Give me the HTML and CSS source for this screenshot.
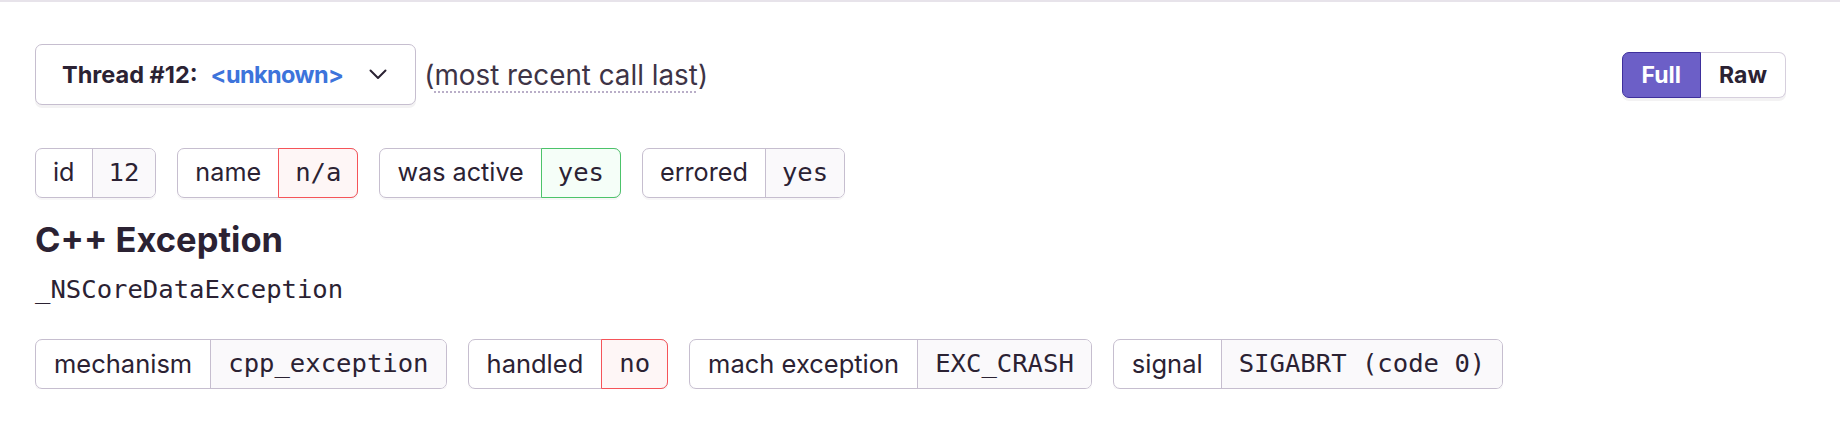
FILE: index.html
```html
<!DOCTYPE html>
<html>
<head>
<meta charset="utf-8">
<link rel="stylesheet" href="styles.css">
</head>
<body>
<div class="page">
  <div class="header">
    <div class="header-left">
      <button class="dropdown">
        <span class="dd-label">Thread #12:</span>
        <span class="dd-value">&lt;unknown&gt;</span>
        <svg class="chevron" width="18" height="11" viewBox="0 0 18 11"><path d="M1.5 1.5 L9 9 L16.5 1.5" fill="none" stroke="#2b2233" stroke-width="2" stroke-linecap="round" stroke-linejoin="round"/></svg>
      </button>
      <span class="order">(<span class="dotted">most recent call last</span>)</span>
    </div>
    <div class="seg">
      <button class="seg-btn active">Full</button>
      <button class="seg-btn">Raw</button>
    </div>
  </div>

  <div class="pills">
    <div class="pill"><span class="key">id</span><span class="val">12</span></div>
    <div class="pill"><span class="key">name</span><span class="val bad">n/a</span></div>
    <div class="pill"><span class="key">was active</span><span class="val good">yes</span></div>
    <div class="pill"><span class="key">errored</span><span class="val">yes</span></div>
  </div>

  <h3 class="exc-type">C++ Exception</h3>
  <div class="exc-value">_NSCoreDataException</div>

  <div class="pills mech">
    <div class="pill"><span class="key">mechanism</span><span class="val">cpp_exception</span></div>
    <div class="pill"><span class="key">handled</span><span class="val bad">no</span></div>
    <div class="pill"><span class="key">mach exception</span><span class="val">EXC_CRASH</span></div>
    <div class="pill"><span class="key">signal</span><span class="val">SIGABRT (code 0)</span></div>
  </div>
</div>
</body>
</html>
```

FILE: styles.css
```css
html, body {
  margin: 0;
  padding: 0;
  background: #ffffff;
}
body {
  font-family: Inter, "Noto Sans", sans-serif;
  color: #2b2233;
  border-top: 2px solid #e7e3ea;
  padding-top: 1px;
}
.page {
  padding: 41px 54px 0 35px;
}
.header {
  display: flex;
  align-items: flex-start;
  justify-content: space-between;
}
.header-left {
  display: flex;
  align-items: center;
  gap: 8px;
}
.dropdown {
  display: flex;
  align-items: center;
  height: 61px;
  box-sizing: border-box;
  padding: 0 28px 0 26px;
  background: #fff;
  border: 1px solid #c6becf;
  border-radius: 7px;
  box-shadow: 0 3px 0 rgba(43, 34, 51, 0.06);
  font-family: Inter, sans-serif;
  font-size: 23.5px;
  font-weight: 700;
  color: #2b2233;
}
.dd-label {
  margin-right: 13px;
}
.dd-value {
  color: #3d74db;
  margin-right: 26px;
  letter-spacing: -0.6px;
}
.chevron {
  display: block;
}
.order {
  font-size: 27.8px;
  color: #3e3446;
}
.dotted {
  text-decoration: underline dotted #b9aec8;
  text-underline-offset: 7px;
  text-decoration-thickness: 2px;
}
.seg {
  display: flex;
  margin-top: 8px;
  border-radius: 7px;
  box-shadow: 0 3px 0 rgba(43, 34, 51, 0.06);
}
.seg-btn {
  height: 46px;
  box-sizing: border-box;
  font-family: Inter, sans-serif;
  font-size: 23px;
  font-weight: 700;
  color: #2b2233;
  background: #fff;
  border: 1px solid #d6cfdd;
  padding: 0 18px;
}
.seg-btn:first-child {
  border-radius: 7px 0 0 7px;
}
.seg-btn:last-child {
  border-radius: 0 7px 7px 0;
  border-left: none;
}
.seg-btn.active {
  background: #6c5fc7;
  border-color: #3e2f9c;
  color: #fff;
  padding: 0 19px;
}
.pills {
  display: flex;
  gap: 21px;
  margin-top: 43px;
}
.pill {
  display: flex;
  height: 50px;
  box-sizing: border-box;
  border: 1px solid #c6becf;
  border-radius: 7px;
  box-shadow: 0 2px 0 rgba(43, 34, 51, 0.04);
  font-size: 25.2px;
  color: #2b2233;
}
.key, .val {
  display: flex;
  align-items: center;
  padding: 0 17px 2px 17px;
}
.val {
  padding: 0 16px 2px 16px;
  background: #faf9fb;
  border-left: 1px solid #c6becf;
  border-radius: 0 6px 6px 0;
  font-family: "DejaVu Sans Mono", "Liberation Mono", monospace;
  font-size: 25.6px;
}
.mech {
  gap: 21px;
}
.mech .pill {
  font-size: 25.5px;
}
.mech .key {
  padding: 0 18px 2px 18px;
}
.mech .val {
  padding: 0 17px 2px 17px;
}
.val.bad {
  background: #fef6f6;
  border: 1px solid #f55459;
  margin: -1px -1px -1px 0;
  border-radius: 0 7px 7px 0;
}
.val.good {
  background: #f5fef8;
  border: 1px solid #4cc36a;
  margin: -1px -1px -1px 0;
  border-radius: 0 7px 7px 0;
}
.exc-type {
  margin: 22px 0 0;
  font-size: 34.5px;
  font-weight: 700;
  line-height: 40px;
  color: #2b2233;
}
.exc-value {
  margin-top: 12px;
  font-family: "DejaVu Sans Mono", "Liberation Mono", monospace;
  font-size: 25.6px;
  line-height: 34px;
  color: #2b2233;
}
.pills + .exc-type {
  margin-top: 22px;
}
.exc-value + .pills {
  margin-top: 33px;
}
```
